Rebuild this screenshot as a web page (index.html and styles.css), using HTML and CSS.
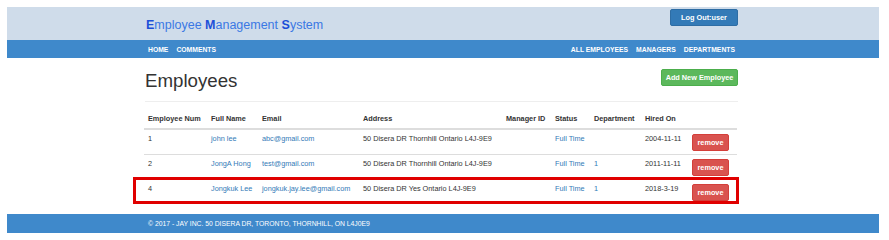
FILE: index.html
```html
<!DOCTYPE html>
<html lang="en">
<head>
    <meta charset="UTF-8">
    <meta name="viewport" content="width=device-width, initial-scale=1.0">
    <title>Employees</title>
    <link rel="stylesheet" href="styles.css">
</head>
<body>

    <div class="page">
        <div class="topHeader">
            <div class="container headerRow">
                <div class="siteTitle"><b>E</b>mployee <b>M</b>anagement <b>S</b>ystem</div>
                <div class="btn btnBlue">Log Out:user</div>
            </div>
        </div>

        <div class="navBar">
            <div class="container navRow">
                <div class="navLinks">
                    <span>Home</span>
                    <span>Comments</span>
                </div>
                <div class="navLinks">
                    <span>All Employees</span>
                    <span>Managers</span>
                    <span>Departments</span>
                </div>
            </div>
        </div>

        <div class="container main">
            <div class="pageHeader">
                <h1>Employees</h1>
                <div class="btn btnGreen">Add New Employee</div>
            </div>

            <div class="tableWrap">
                <table class="empTable">
                    <colgroup>
                        <col style="width:63px">
                        <col style="width:51px">
                        <col style="width:101px">
                        <col style="width:143px">
                        <col style="width:49px">
                        <col style="width:39px">
                        <col style="width:51px">
                        <col style="width:47px">
                        <col style="width:49px">
                    </colgroup>
                    <thead>
                        <tr>
                            <th>Employee Num</th>
                            <th>Full Name</th>
                            <th>Email</th>
                            <th>Address</th>
                            <th>Manager ID</th>
                            <th>Status</th>
                            <th>Department</th>
                            <th>Hired On</th>
                            <th></th>
                        </tr>
                    </thead>
                    <tbody>
                        <tr>
                            <td>1</td>
                            <td><a>john lee</a></td>
                            <td><a>abc@gmail.com</a></td>
                            <td>50 Disera DR Thornhill Ontario L4J-9E9</td>
                            <td></td>
                            <td><a>Full Time</a></td>
                            <td></td>
                            <td>2004-11-11</td>
                            <td><div class="btn btnRed">remove</div></td>
                        </tr>
                        <tr>
                            <td>2</td>
                            <td><a>JongA Hong</a></td>
                            <td><a>test@gmail.com</a></td>
                            <td>50 Disera DR Thornhill Ontario L4J-9E9</td>
                            <td></td>
                            <td><a>Full Time</a></td>
                            <td><a>1</a></td>
                            <td>2011-11-11</td>
                            <td><div class="btn btnRed">remove</div></td>
                        </tr>
                        <tr>
                            <td>4</td>
                            <td><a>Jongkuk Lee</a></td>
                            <td><a>jongkuk.jay.lee@gmail.com</a></td>
                            <td>50 Disera DR Yes Ontario L4J-9E9</td>
                            <td></td>
                            <td><a>Full Time</a></td>
                            <td><a>1</a></td>
                            <td>2018-3-19</td>
                            <td><div class="btn btnRed">remove</div></td>
                        </tr>
                    </tbody>
                </table>
                <div class="highlight"></div>
            </div>
        </div>

        <div class="footer">
            <div class="container">&copy; 2017 - Jay Inc. 50 Disera Dr, Toronto, Thornhill, ON L4J0E9</div>
        </div>
    </div>

</body>
</html>
```

FILE: styles.css
```css
body{
    margin: 7px 10px 0 7px;
    font-family: "Liberation Sans", Arial, sans-serif;
    font-size: 7.3px;
    color: #333;
    background-color: white;
}

.container{
    width: 593px;
    margin-left: 131px;
    padding-left: 7px;
}

.topHeader{
    height: 33px;
    background-color: #cfdcea;
}

.headerRow{
    display: flex;
    justify-content: space-between;
    align-items: flex-start;
}

.siteTitle{
    font-size: 12.5px;
    line-height: 14px;
    padding-top: 11px;
    padding-left: 1px;
    color: #3a78e4;
}

.siteTitle b{
    color: #1c4fd8;
}

.btn{
    box-sizing: border-box;
    height: 17px;
    color: white;
    font-weight: bold;
    text-align: center;
    border-radius: 2px;
    line-height: 15px;
}

.btnBlue{
    width: 68px;
    margin-top: 2px;
    background-color: #337ab7;
    border: 1px solid #2e6da4;
}

.btnGreen{
    width: 77px;
    background-color: #5cb85c;
    border: 1px solid #4cae4c;
}

.btnRed{
    width: 37px;
    background-color: #d9534f;
    border: 1px solid #d43f3a;
}

.navBar{
    height: 18px;
    background-color: #3f89cb;
}

.navRow{
    display: flex;
    justify-content: space-between;
    height: 18px;
    align-items: center;
}

.navLinks{
    display: flex;
    gap: 8px;
    padding-left: 3px;
    padding-right: 3px;
}

.navLinks span{
    color: white;
    font-weight: bold;
    font-size: 6.8px;
    text-transform: uppercase;
}

.main{
    padding-top: 11px;
    padding-bottom: 10px;
}

.pageHeader{
    display: flex;
    justify-content: space-between;
    align-items: flex-start;
    border-bottom: 1px solid #eee;
    padding-bottom: 10px;
    margin-bottom: 8px;
}

h1{
    margin: 0;
    font-size: 18.7px;
    font-weight: normal;
    line-height: 21px;
    padding-top: 1px;
}

.tableWrap{
    position: relative;
}

.empTable{
    width: 593px;
    table-layout: fixed;
    border-collapse: collapse;
    margin-left: -1px;
}

.empTable th,
.empTable td{
    text-align: left;
    vertical-align: top;
    padding: 4px 4px 3px 4px;
    line-height: 10px;
    white-space: nowrap;
}

.empTable th{
    padding-top: 4px;
    padding-bottom: 4px;
    border-bottom: 2px solid #ddd;
}

.empTable td{
    border-top: 1px solid #ddd;
}

.empTable a{
    color: #337ab7;
}

.highlight{
    position: absolute;
    left: -12px;
    right: -1px;
    top: 67px;
    height: 21px;
    border: 3px solid #e00000;
}

.footer{
    height: 19px;
    line-height: 19px;
    background-color: #3f89cb;
    color: white;
    font-size: 6.8px;
    text-transform: uppercase;
}

.footer .container{
    padding-left: 10px;
    width: 590px;
}
```
